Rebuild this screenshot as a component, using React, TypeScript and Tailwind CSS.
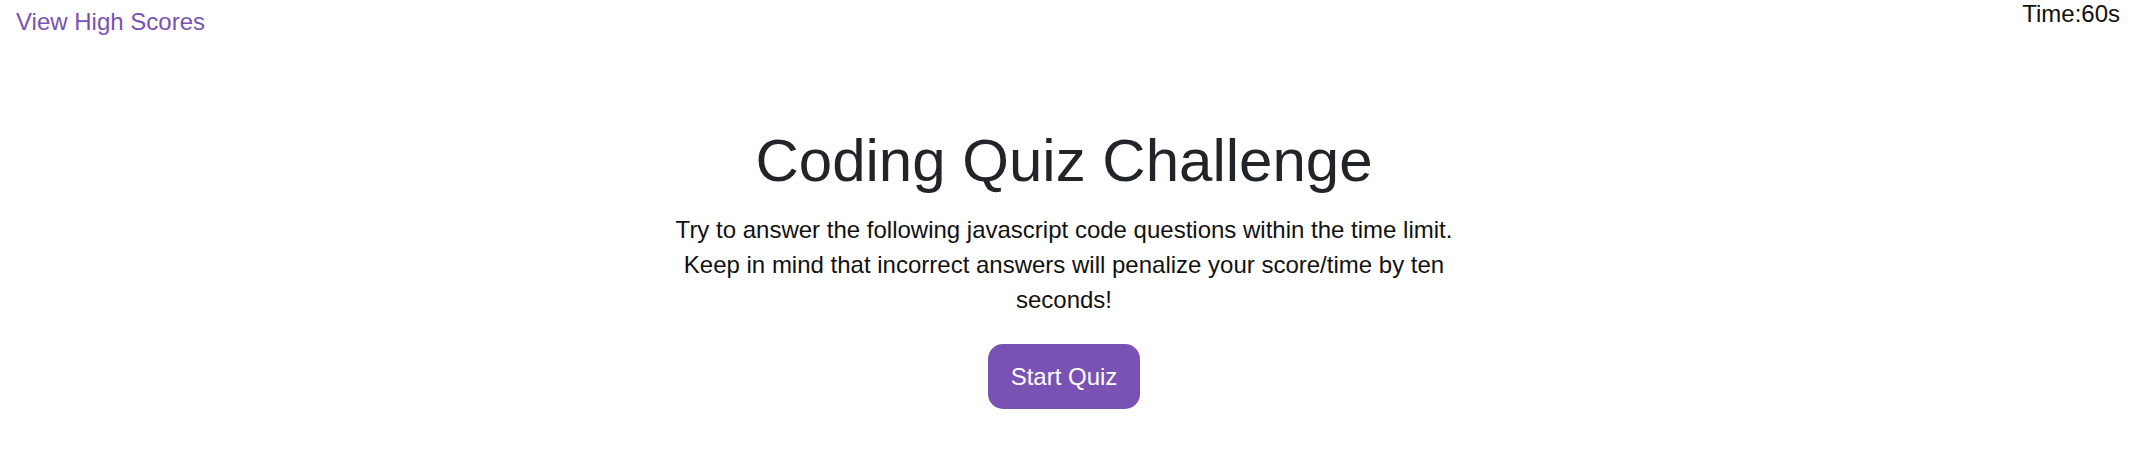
import React from 'react';

const Header: React.FC = () => {
  return (
    <header className="flex items-start justify-between leading-[28px] text-[24px]">
      <a href="#" className="pl-[16px] pt-[8px] text-[#7952b3] no-underline">
        View High Scores
      </a>
      <div className="pr-[14px] text-[#111111]">Time:60s</div>
    </header>
  );
};

export default function App() {
  return (
    <div className="min-h-screen bg-white font-['Liberation_Sans',Arial,sans-serif]">
      <Header />
      <main className="flex flex-col items-center pr-[6px] text-center">
        <h1 className="mt-[89px] text-[60px] font-normal leading-[72px] text-[#212529]">
          Coding Quiz Challenge
        </h1>
        <p className="mt-[15px] max-w-[800px] text-[24px] leading-[35px] text-[#111111]">
          Try to answer the following javascript code questions within the time limit. Keep in mind
          that incorrect answers will penalize your score/time by ten seconds!
        </p>
        <button
          type="button"
          className="mt-[27px] flex h-[65px] w-[152px] items-center justify-center rounded-[15px] bg-[#7952b3] text-[24px] leading-[36px] text-white"
        >
          Start Quiz
        </button>
      </main>
    </div>
  );
}
